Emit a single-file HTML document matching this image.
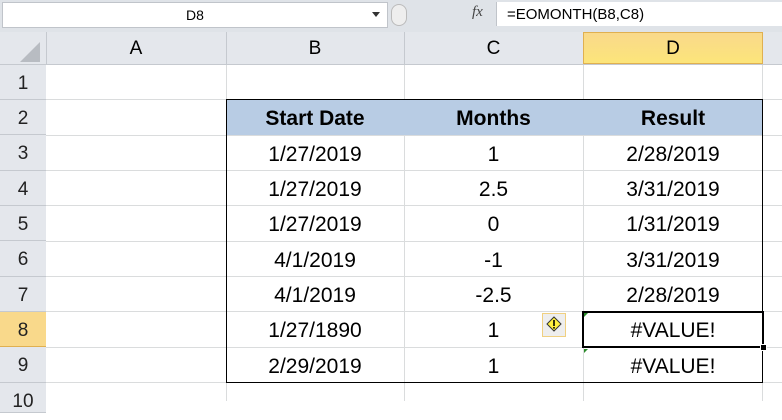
<!DOCTYPE html><html><head><style>
body{margin:0;width:782px;height:401px;overflow:hidden;background:#fff;font-family:"Liberation Sans",sans-serif;position:relative}
.a{position:absolute}
.c{position:absolute;text-align:center;font-size:21px;color:#000;line-height:38px}
.rh{position:absolute;left:0;width:46px;text-align:center;font-size:19px;color:#222;background:#e4e7ec;border-bottom:1px solid #c5c9cf;box-sizing:border-box;line-height:37px}
</style></head><body>
<div class="a" style="left:0;top:0;width:782px;height:32px;background:#dfe3e8"></div>
<div class="a" style="left:2px;top:2px;width:384px;height:24px;background:#fff;border:1px solid #c0c4ca;font-size:14px;line-height:24px;text-align:center">D8</div>
<div class="a" style="left:372px;top:12px;width:0;height:0;border-left:4px solid transparent;border-right:4px solid transparent;border-top:5px solid #333"></div>
<div class="a" style="left:391px;top:4px;width:14px;height:20px;border-radius:10px;border:1px solid #bbb;background:#eee"></div>
<div class="a" style="left:472px;top:4px;font-size:15px;font-style:italic;font-family:'Liberation Serif',serif;color:#444">fx</div>
<div class="a" style="left:496px;top:2px;width:286px;height:24px;background:#fff;border-left:1px solid #c0c4ca;font-size:15px;line-height:26px;padding-left:10px">=EOMONTH(B8,C8)</div>
<div class="a" style="left:0;top:32px;width:782px;height:33px;background:#e4e7ec;border-bottom:1px solid #c5c9cf;box-sizing:border-box"></div>
<div class="a" style="left:20px;top:42px;width:0;height:0;border-left:20px solid transparent;border-bottom:20px solid #b8bcc2"></div>
<div class="a" style="left:46px;top:32px;width:1px;height:33px;background:#c5c9cf"></div>
<div class="a" style="left:226px;top:32px;width:1px;height:33px;background:#c5c9cf"></div>
<div class="a" style="left:404px;top:32px;width:1px;height:33px;background:#c5c9cf"></div>
<div class="a" style="left:583px;top:32px;width:180px;height:32px;background:linear-gradient(#f9d98b,#fce57a);border:1px solid #e0b050;box-sizing:border-box"></div>
<div class="c" style="left:46px;top:32px;width:180px;line-height:34px;font-size:19px">A</div>
<div class="c" style="left:226px;top:32px;width:178px;line-height:34px;font-size:19px">B</div>
<div class="c" style="left:404px;top:32px;width:179px;line-height:34px;font-size:19px">C</div>
<div class="c" style="left:583px;top:32px;width:180px;line-height:34px;font-size:19px">D</div>
<svg class="a" style="left:46px;top:65px" width="736" height="336">
<g stroke="#dadcdd" stroke-width="1">
<line x1="180.5" y1="0" x2="180.5" y2="336"/><line x1="358.5" y1="0" x2="358.5" y2="336"/><line x1="537.5" y1="0" x2="537.5" y2="336"/><line x1="716.5" y1="0" x2="716.5" y2="336"/>
<line x1="0" y1="34.5" x2="736" y2="34.5"/><line x1="0" y1="70.5" x2="736" y2="70.5"/><line x1="0" y1="105.5" x2="736" y2="105.5"/><line x1="0" y1="140.5" x2="736" y2="140.5"/><line x1="0" y1="176.5" x2="736" y2="176.5"/><line x1="0" y1="211.5" x2="736" y2="211.5"/><line x1="0" y1="246.5" x2="736" y2="246.5"/><line x1="0" y1="282.5" x2="736" y2="282.5"/><line x1="0" y1="317.5" x2="736" y2="317.5"/>
</g></svg>
<div class="rh" style="top:65px;height:35px">1</div>
<div class="rh" style="top:100px;height:35px">2</div>
<div class="rh" style="top:135px;height:36px">3</div>
<div class="rh" style="top:171px;height:35px">4</div>
<div class="rh" style="top:206px;height:35px">5</div>
<div class="rh" style="top:241px;height:36px">6</div>
<div class="rh" style="top:277px;height:35px">7</div>
<div class="rh" style="top:312px;height:35px;background:#f9d98b;border-bottom-color:#e0b050">8</div>
<div class="rh" style="top:347px;height:36px">9</div>
<div class="rh" style="top:383px;height:30px">10</div>
<div class="a" style="left:226px;top:99px;width:537px;height:36px;background:#b8cce4"></div>
<div class="a" style="left:226px;top:99px;width:537px;height:284px;border:1px solid #000;box-sizing:border-box"></div>
<div class="c" style="left:226px;top:100px;width:178px;font-weight:bold">Start Date</div>
<div class="c" style="left:404px;top:100px;width:179px;font-weight:bold">Months</div>
<div class="c" style="left:583px;top:100px;width:180px;font-weight:bold">Result</div>
<div class="c" style="left:226px;top:136px;width:178px">1/27/2019</div><div class="c" style="left:404px;top:136px;width:179px">1</div><div class="c" style="left:583px;top:136px;width:180px">2/28/2019</div>
<div class="c" style="left:226px;top:171px;width:178px">1/27/2019</div><div class="c" style="left:404px;top:171px;width:179px">2.5</div><div class="c" style="left:583px;top:171px;width:180px">3/31/2019</div>
<div class="c" style="left:226px;top:206px;width:178px">1/27/2019</div><div class="c" style="left:404px;top:206px;width:179px">0</div><div class="c" style="left:583px;top:206px;width:180px">1/31/2019</div>
<div class="c" style="left:226px;top:242px;width:178px">4/1/2019</div><div class="c" style="left:404px;top:242px;width:179px">-1</div><div class="c" style="left:583px;top:242px;width:180px">3/31/2019</div>
<div class="c" style="left:226px;top:277px;width:178px">4/1/2019</div><div class="c" style="left:404px;top:277px;width:179px">-2.5</div><div class="c" style="left:583px;top:277px;width:180px">2/28/2019</div>
<div class="c" style="left:226px;top:312px;width:178px">1/27/1890</div><div class="c" style="left:404px;top:312px;width:179px">1</div><div class="c" style="left:583px;top:312px;width:180px">#VALUE!</div>
<div class="c" style="left:226px;top:348px;width:178px">2/29/2019</div><div class="c" style="left:404px;top:348px;width:179px">1</div><div class="c" style="left:583px;top:348px;width:180px">#VALUE!</div>
<div class="a" style="left:582px;top:311px;width:182px;height:37px;border:2px solid #000;box-sizing:border-box"></div>
<div class="a" style="left:760px;top:344px;width:5px;height:5px;background:#000;border:1px solid #fff"></div>
<div class="a" style="left:584px;top:313px;width:0;height:0;border-top:4px solid #2a8a2a;border-right:4px solid transparent"></div>
<div class="a" style="left:584px;top:349px;width:0;height:0;border-top:4px solid #2a8a2a;border-right:4px solid transparent"></div>
<div class="a" style="left:542px;top:313px;width:24px;height:24px;background:#eee;border:1px solid #f0d080;box-sizing:border-box"></div>
<svg class="a" style="left:545px;top:315px" width="18" height="18"><path d="M9 2L16 9L9 16L2 9Z" fill="#ffef40" stroke="#333" stroke-width="1"/><rect x="8.2" y="5" width="1.6" height="6" fill="#000"/><rect x="8.2" y="12" width="1.6" height="1.6" fill="#000"/></svg>
</body></html>
